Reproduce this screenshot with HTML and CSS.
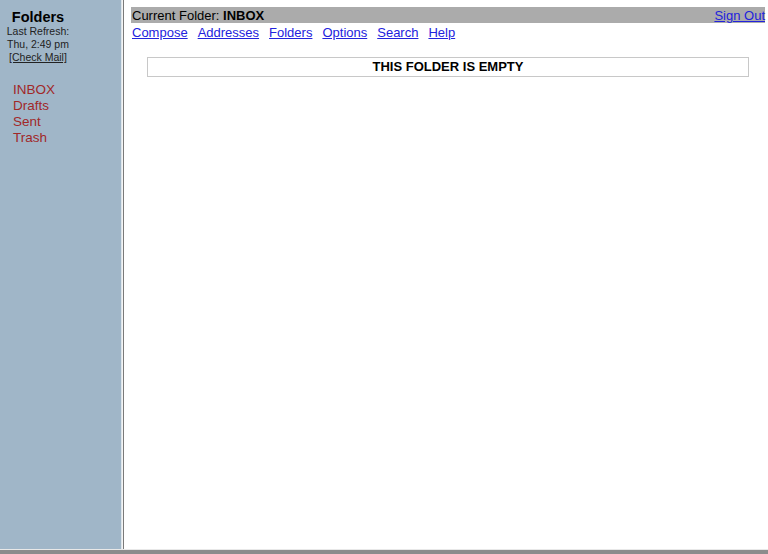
FILE: index.html
```html
<!DOCTYPE html>
<html>
<head>
<meta charset="utf-8">
<title>SquirrelMail</title>
<link rel="stylesheet" href="styles.css">
</head>
<body>
<div class="frames">
  <div class="left">
    <div class="head">
      <div class="title">Folders</div>
      <div class="small">Last Refresh:</div>
      <div class="small">Thu, 2:49 pm</div>
      <div class="small"><a class="check" href="#">[Check Mail]</a></div>
    </div>
    <ul class="folders">
      <li><a href="#">INBOX</a></li>
      <li><a href="#">Drafts</a></li>
      <li><a href="#">Sent</a></li>
      <li><a href="#">Trash</a></li>
    </ul>
  </div>
  <div class="divider"></div>
  <div class="right">
    <div class="bar">
      <span>Current Folder: <b>INBOX</b></span>
      <a href="#">Sign Out</a>
    </div>
    <div class="menu">
      <a href="#">Compose</a>
      <a href="#">Addresses</a>
      <a href="#">Folders</a>
      <a href="#">Options</a>
      <a href="#">Search</a>
      <a href="#">Help</a>
    </div>
    <div class="empty">THIS FOLDER IS EMPTY</div>
  </div>
</div>
<div class="bottom"></div>
</body>
</html>
```
FILE: styles.css
```css
html, body {
  margin: 0;
  padding: 0;
  height: 100%;
  overflow: hidden;
  font-family: "Liberation Sans", Arial, sans-serif;
  background: #ffffff;
}
body {
  display: flex;
  flex-direction: column;
}
.frames {
  flex: 1;
  display: flex;
  min-height: 0;
}
.left {
  width: 121px;
  background: #a0b6c8;
  flex-shrink: 0;
}
.head {
  width: 76px;
  text-align: center;
  padding-top: 9px;
  color: #1a1a1a;
}
.title {
  font-weight: bold;
  font-size: 14.5px;
  line-height: 16px;
  color: #000;
}
.small {
  font-size: 10.5px;
  line-height: 13px;
  color: #222;
}
.check {
  color: #222;
  text-decoration: underline;
}
.folders {
  list-style: none;
  margin: 0;
  padding: 18px 0 0 13px;
}
.folders li {
  font-size: 13.5px;
  line-height: 16px;
}
.folders a {
  color: #a12828;
  text-decoration: none;
}
.divider {
  width: 3px;
  flex-shrink: 0;
  border-left: 1px solid #dde5ea;
  background: linear-gradient(to right, #f4f4f4 0, #f4f4f4 1px, #7a7a7a 1px, #7a7a7a 3px);
  box-sizing: border-box;
}
.right {
  flex: 1;
  padding: 7px 3px 0 7px;
}
.bar {
  background: #ababab;
  height: 16px;
  display: flex;
  justify-content: space-between;
  align-items: center;
  font-size: 13px;
  color: #000;
  padding-left: 1px;
}
.bar a {
  color: #2222dd;
}
.menu {
  display: flex;
  gap: 10px;
  font-size: 13px;
  line-height: 18px;
  padding-left: 1px;
  margin-top: 1px;
}
.menu a {
  color: #2222dd;
}
.empty {
  margin: 15px 16px 0 16px;
  border: 1px solid #c8c8c8;
  height: 18px;
  line-height: 18px;
  text-align: center;
  font-weight: bold;
  font-size: 13px;
  color: #000;
}
.bottom {
  height: 4px;
  flex-shrink: 0;
  border-top: 1px solid #e8e8e8;
  background: #8c8c8c;
}
```
